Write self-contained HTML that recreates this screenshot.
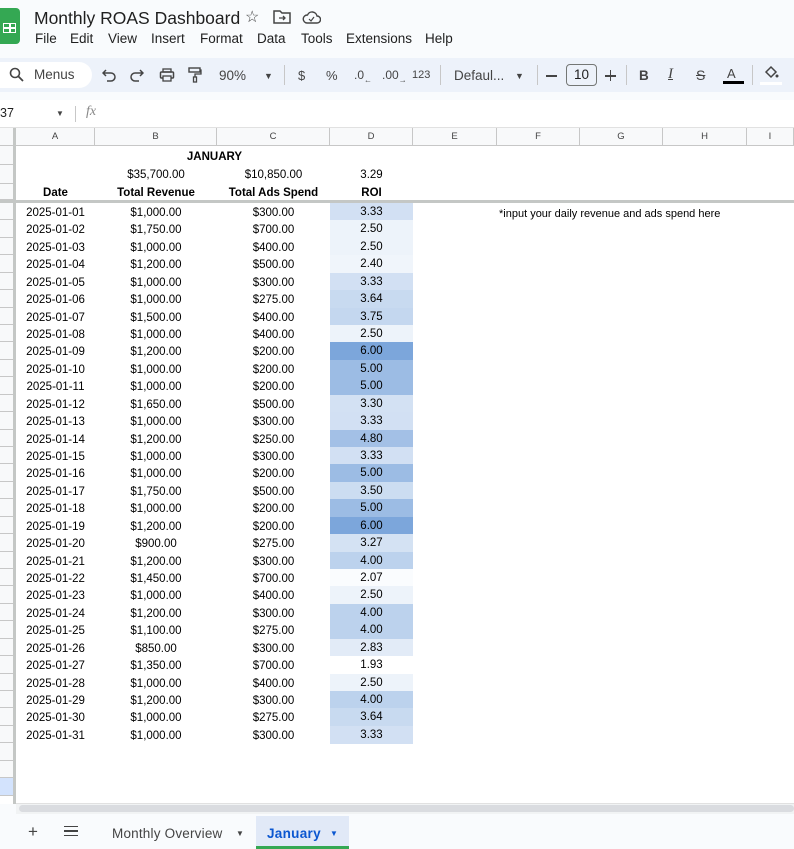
<!DOCTYPE html>
<html><head><meta charset="utf-8"><style>
*{box-sizing:border-box;margin:0;padding:0}
body{width:794px;height:849px;overflow:hidden;background:#f9fbfd;font-family:"Liberation Sans",Arial,sans-serif;position:relative;color:#1f1f1f}
.abs{position:absolute}
.title{left:34px;top:8px;font-size:17.5px;color:#1f1f1f}
.menu{top:31px;font-size:13.5px;color:#1f1f1f}
.tb{top:58px;left:0;width:794px;height:34px;background:#edf2fa}
.tbt{font-size:13px;color:#444;top:68px}
.sep{width:1px;height:20px;background:#c7c7c7;top:65px}
.fbar{top:100px;left:0;width:794px;height:28px;background:#fff;border-bottom:1px solid #e1e1e1}
.grid{top:128px;left:0;width:794px;height:676px;background:#fff}
.colh{top:128px;height:18px;background:#f8f9fa;border-right:1px solid #c7c7c7;border-bottom:1px solid #c7c7c7;font-size:9.5px;color:#444;text-align:center;line-height:18px}
.rowh{left:0;width:14px;background:#f8f9fa;border-bottom:1px solid #c7c7c7;font-size:10px;color:#444;text-align:left;overflow:hidden;text-indent:-6px}
.c{font-size:11.5px;text-align:center;line-height:17px;height:17px;color:#000}
.b{font-weight:bold}
</style></head><body>
<div class="abs" style="left:0;top:8px;width:20px;height:36px;background:#34a853;border-radius:0 4px 4px 0"></div>
<div class="abs" style="left:3px;top:23px;width:13px;height:10px;border:1.5px solid #fff"></div>
<div class="abs" style="left:3px;top:27px;width:13px;height:1.5px;background:#fff"></div>
<div class="abs" style="left:9px;top:23px;width:1.5px;height:10px;background:#fff"></div>
<div class="abs title">Monthly ROAS Dashboard</div>
<div class="abs" style="left:245px;top:7px;font-size:16px;color:#444">☆</div>
<svg class="abs" style="left:273px;top:10px" width="18" height="14" viewBox="0 0 18 14"><path d="M1 1h6l2 2h8v10H1z" fill="none" stroke="#444" stroke-width="1.5"/><path d="M6 8h6M10 6l2 2-2 2" fill="none" stroke="#444" stroke-width="1.3"/></svg>
<svg class="abs" style="left:302px;top:10px" width="19" height="14" viewBox="0 0 19 14"><path d="M5 13h10a3.5 3.5 0 0 0 0-7 5 5 0 0 0-9.5-1A4 4 0 0 0 5 13z" fill="none" stroke="#444" stroke-width="1.4"/><path d="M7 9l2 2 3-4" fill="none" stroke="#444" stroke-width="1.2"/></svg>
<div class="abs menu" style="left:35px">File</div>
<div class="abs menu" style="left:70px">Edit</div>
<div class="abs menu" style="left:108px">View</div>
<div class="abs menu" style="left:151px">Insert</div>
<div class="abs menu" style="left:200px">Format</div>
<div class="abs menu" style="left:257px">Data</div>
<div class="abs menu" style="left:301px">Tools</div>
<div class="abs menu" style="left:346px">Extensions</div>
<div class="abs menu" style="left:425px">Help</div>
<div class="abs tb"></div>
<div class="abs" style="left:0;top:62px;width:92px;height:26px;background:#fff;border-radius:0 13px 13px 0"></div>
<svg class="abs" style="left:9px;top:67px" width="16" height="16" viewBox="0 0 16 16"><circle cx="6" cy="6" r="4.5" fill="none" stroke="#444" stroke-width="1.6"/><path d="M9.5 9.5L14 14" stroke="#444" stroke-width="1.8"/></svg>
<div class="abs tbt" style="left:34px;font-size:13.5px;top:67px">Menus</div>
<svg class="abs" style="left:102px;top:68px" width="14" height="14" viewBox="0 0 14 14"><path d="M4 2L1 5l3 3M1 5h8a4 4 0 0 1 0 8H5" fill="none" stroke="#444" stroke-width="1.5"/></svg>
<svg class="abs" style="left:130px;top:68px" width="14" height="14" viewBox="0 0 14 14"><path d="M10 2l3 3-3 3M13 5H5a4 4 0 0 0 0 8h4" fill="none" stroke="#444" stroke-width="1.5"/></svg>
<svg class="abs" style="left:159px;top:68px" width="16" height="14" viewBox="0 0 16 14"><rect x="1.5" y="4" width="13" height="6" rx="1" fill="none" stroke="#444" stroke-width="1.5"/><rect x="4" y="1" width="8" height="3" fill="none" stroke="#444" stroke-width="1.3"/><rect x="4" y="8" width="8" height="5" fill="#edf2fa" stroke="#444" stroke-width="1.3"/></svg>
<svg class="abs" style="left:188px;top:67px" width="14" height="16" viewBox="0 0 14 16"><rect x="1" y="1" width="11" height="4" fill="none" stroke="#444" stroke-width="1.4"/><path d="M12 3h1v4H7v3" fill="none" stroke="#444" stroke-width="1.3"/><rect x="5.5" y="10" width="3" height="5" fill="none" stroke="#444" stroke-width="1.3"/></svg>
<div class="abs tbt" style="left:219px;font-size:13.5px;top:68px">90%</div>
<div class="abs tbt" style="left:264px;font-size:9px;top:71px">▼</div>
<div class="abs sep" style="left:284px"></div>
<div class="abs tbt" style="left:298px;top:68px">$</div>
<div class="abs tbt" style="left:326px;top:68px">%</div>
<div class="abs tbt" style="left:354px;font-size:12px">.0<sub style="font-size:8px">←</sub></div>
<div class="abs tbt" style="left:382px;font-size:12px">.00<sub style="font-size:8px">→</sub></div>
<div class="abs tbt" style="left:412px;font-size:11px;top:69px">123</div>
<div class="abs sep" style="left:440px"></div>
<div class="abs tbt" style="left:454px;font-size:13.5px;top:68px">Defaul...</div>
<div class="abs tbt" style="left:515px;font-size:9px;top:71px">▼</div>
<div class="abs sep" style="left:537px"></div>
<div class="abs" style="left:546px;top:75px;width:11px;height:1.5px;background:#444"></div>
<div class="abs" style="left:566px;top:64px;width:31px;height:22px;border:1px solid #747775;border-radius:4px;background:#edf2fa;font-size:13.5px;text-align:center;line-height:20px;color:#1f1f1f">10</div>
<div class="abs" style="left:605px;top:75px;width:11px;height:1.5px;background:#444"></div>
<div class="abs" style="left:609.75px;top:70px;width:1.5px;height:11px;background:#444"></div>
<div class="abs sep" style="left:626px"></div>
<div class="abs tbt b" style="left:639px;font-size:13.5px;top:68px">B</div>
<div class="abs tbt" style="left:668px;font-size:15px;top:66px;font-style:italic;font-family:'Liberation Serif',serif;text-decoration:underline">I</div>
<div class="abs tbt" style="left:696px;font-size:14px;top:67px;text-decoration:line-through">S</div>
<div class="abs tbt" style="left:727px;font-size:13px;top:66px">A</div>
<div class="abs" style="left:723px;top:81px;width:21px;height:3px;background:#000"></div>
<div class="abs sep" style="left:752px"></div>
<svg class="abs" style="left:763px;top:65px" width="16" height="16" viewBox="0 0 16 16"><path d="M3 7l5-5 5 5-5 5z" fill="none" stroke="#444" stroke-width="1.5"/><circle cx="14" cy="11" r="1.5" fill="#444"/></svg>
<div class="abs" style="left:760px;top:82px;width:22px;height:3px;background:#fff"></div>
<div class="abs fbar"></div>
<div class="abs" style="left:0;top:106px;font-size:12.5px;color:#1f1f1f">37</div>
<div class="abs" style="left:56px;top:109px;font-size:8px;color:#444">▼</div>
<div class="abs" style="left:75px;top:106px;width:1px;height:16px;background:#c7c7c7"></div>
<div class="abs" style="left:86px;top:104px;font-size:14px;color:#888;font-style:italic;font-family:'Liberation Serif',serif">fx</div>
<div class="abs grid"></div>
<div id="g"></div>
<div class="abs" style="left:0;top:200px;width:794px;height:3px;background:#c4c7c5"></div>
<div class="abs" style="left:13px;top:128px;width:3px;height:676px;background:#c4c7c5"></div>
<div class="abs" style="left:499px;top:208px;font-size:11px;color:#000">*input your daily revenue and ads spend here</div>
<div class="abs" style="left:16px;top:803px;width:778px;height:11px;background:#f1f3f4;border-top:1px solid #e1e1e1"></div>
<div class="abs" style="left:19px;top:805px;width:775px;height:7px;background:#dadce0;border-radius:4px"></div>
<div class="abs" style="left:0;top:815px;width:794px;height:34px;background:#f9fbfd"></div>
<div class="abs" style="left:28px;top:822px;font-size:17px;color:#444">+</div>
<div class="abs" style="left:64px;top:826px;width:14px;height:10px;border-top:1.5px solid #444;border-bottom:1.5px solid #444"></div>
<div class="abs" style="left:64px;top:830px;width:14px;height:1.5px;background:#444"></div>
<div class="abs" style="left:112px;top:826px;font-size:13.5px;color:#444;letter-spacing:0.2px">Monthly Overview</div>
<div class="abs" style="left:236px;top:829px;font-size:8px;color:#444">▼</div>
<div class="abs" style="left:256px;top:816px;width:93px;height:33px;background:#e1e9f7"></div>
<div class="abs" style="left:256px;top:846px;width:93px;height:3px;background:#34a853"></div>
<div class="abs" style="left:267px;top:826px;font-size:13.5px;color:#0b57d0;font-weight:bold;letter-spacing:0.3px">January</div>
<div class="abs" style="left:330px;top:829px;font-size:8px;color:#0b57d0">▼</div>
<script>
var cols=[[16,95,'A'],[95,217,'B'],[217,330,'C'],[330,413,'D'],[413,497,'E'],[497,580,'F'],[580,663,'G'],[663,747,'H'],[747,794,'I']];
var h='';
h+='<div class="abs colh" style="left:0;width:16px"></div>';
cols.forEach(function(c){h+='<div class="abs colh" style="left:'+c[0]+'px;width:'+(c[1]-c[0])+'px">'+c[2]+'</div>';});
function cell(x1,x2,y,t,cls,bg){return '<div class="abs c '+(cls||'')+'" style="left:'+x1+'px;width:'+(x2-x1)+'px;top:'+y+'px;'+(bg?'background:'+bg:'')+'">'+t+'</div>';}
var tops=[146,165,184];
tops.forEach(function(t,i){h+='<div class="abs rowh" style="top:'+t+'px;height:'+(i==2?16:19)+'px;line-height:18px"></div>';});
var rh=17.43;
var last='4567890123456789012345678901234567';
for(var i=0;i<34;i++){var t=203+i*rh;var bg=(i==33)?'#d3e3fd':'#f8f9fa';h+='<div class="abs rowh" style="top:'+t+'px;height:'+rh+'px;line-height:17px;background:'+bg+'">'+last[i]+'</div>';}
h+=cell(16,413,147+2,'JANUARY','b');
h+=cell(95,217,166+1,'$35,700.00');h+=cell(217,330,166+1,'$10,850.00');h+=cell(330,413,166+1,'3.29');
h+=cell(16,95,185,'Date','b');h+=cell(95,217,185,'Total Revenue','b');h+=cell(217,330,185,'Total Ads Spend','b');h+=cell(330,413,185,'ROI','b');
var rev=['1,000','1,750','1,000','1,200','1,000','1,000','1,500','1,000','1,200','1,000','1,000','1,650','1,000','1,200','1,000','1,000','1,750','1,000','1,200','900','1,200','1,450','1,000','1,200','1,100','850','1,350','1,000','1,200','1,000','1,000'];
var sp=['300','700','400','500','300','275','400','400','200','200','200','500','300','250','300','200','500','200','200','275','300','700','400','300','275','300','700','400','300','275','300'];
var roi=['3.33','2.50','2.50','2.40','3.33','3.64','3.75','2.50','6.00','5.00','5.00','3.30','3.33','4.80','3.33','5.00','3.50','5.00','6.00','3.27','4.00','2.07','2.50','4.00','4.00','2.83','1.93','2.50','4.00','3.64','3.33'];
for(var i=0;i<31;i++){var y=205+i*rh;var d=i+1;var ds='2025-01-'+(d<10?'0'+d:d);
var v=parseFloat(roi[i]);var tt=(v-1.93)/4.07;var r=Math.round(255-131*tt),g=Math.round(255-89*tt),b=Math.round(255-36*tt);
h+=cell(16,95,y,ds);h+=cell(95,217,y,'$'+rev[i]+'.00');h+=cell(217,330,y,'$'+sp[i]+'.00');
h+='<div class="abs c" style="left:330px;width:83px;top:'+(203+i*rh)+'px;height:'+(rh+0.5)+'px;padding-top:2px;line-height:'+(rh-2)+'px;background:rgb('+r+','+g+','+b+')">'+roi[i]+'</div>';}
document.getElementById('g').innerHTML=h;
</script>
</body></html>
